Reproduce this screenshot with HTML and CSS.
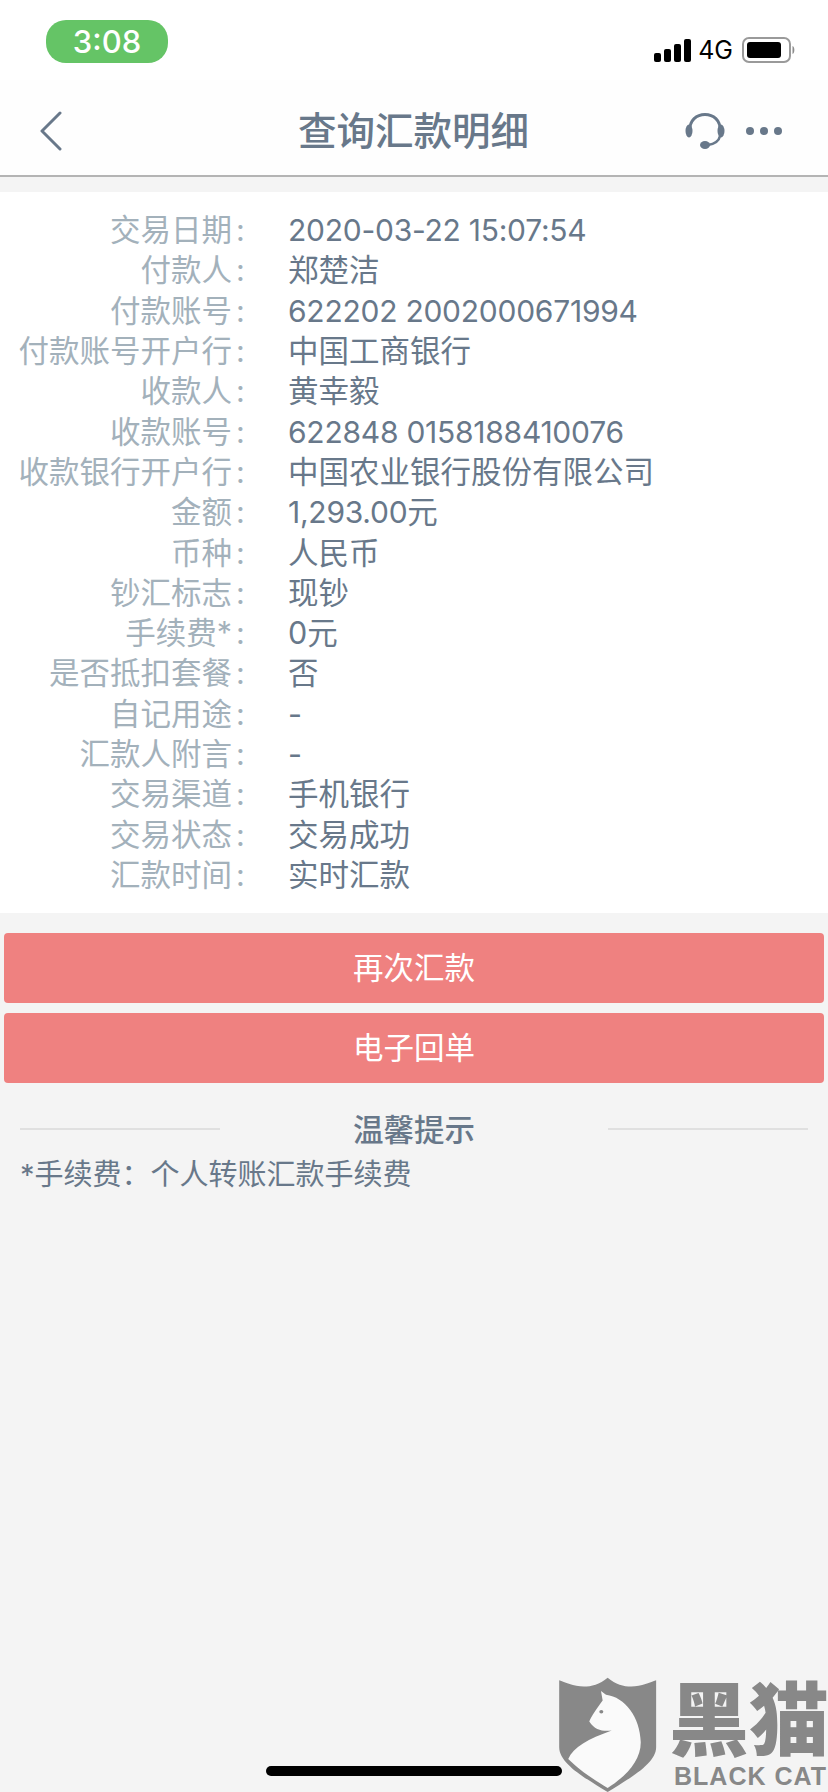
FILE: index.html
```html
<!DOCTYPE html>
<html lang="zh-CN">
<head>
    <meta charset="UTF-8">
    <meta name="viewport" content="width=device-width, initial-scale=1.0">
    <title>查询汇款明细</title>
    <link rel="stylesheet" href="styles.css">
</head>
<body>
    <header class="status-bar">
        <span class="time-pill">3:08</span>
        <div class="status-icons">
            <svg class="signal" width="37" height="23" viewBox="0 0 37 23">
                <rect x="0" y="14" width="7" height="9" rx="2"/>
                <rect x="10" y="10" width="7" height="13" rx="2"/>
                <rect x="20" y="5" width="7" height="18" rx="2"/>
                <rect x="30" y="0" width="7" height="23" rx="2"/>
            </svg>
            <span class="network">4G</span>
            <svg class="battery" width="54" height="26" viewBox="0 0 54 26">
                <rect x="1" y="1" width="47" height="24" rx="6" fill="none" stroke="#9a9a9a" stroke-width="2"/>
                <rect x="5" y="5" width="34" height="16" rx="3"/>
                <path d="M50.500 9 C53 10 53 16 50.500 17 Z" fill="#8c8c8c"/>
            </svg>
        </div>
    </header>

    <nav class="nav-bar">
        <svg class="back" width="24" height="40" viewBox="0 0 24 40">
            <path d="M21 2 L3 20 L21 38" fill="none" stroke="#68788a" stroke-width="3" stroke-linecap="round" stroke-linejoin="round"/>
        </svg>
        <h1>查询汇款明细</h1>
        <div class="nav-actions">
            <svg width="40" height="36" viewBox="0 0 40 36">
                <path d="M5 18 C3 -4 37 -4 35 18" fill="none" stroke="#68788a" stroke-width="3"/>
                <ellipse cx="4" cy="18" rx="3.500" ry="6.500" fill="#68788a"/>
                <ellipse cx="36" cy="18" rx="3.500" ry="6.500" fill="#68788a"/>
                <path d="M35 23 C34 28 29 31 23 32" fill="none" stroke="#68788a" stroke-width="2.500"/>
                <ellipse cx="20" cy="32" rx="5" ry="4" fill="#68788a"/>
            </svg>
            <div class="dots"><i></i><i></i><i></i></div>
        </div>
    </nav>

    <main>
        <section class="detail">
            <div class="row"><span class="label">交易日期<span class="colon">:</span></span><span class="value"><span class="num">2020-03-22 15:07:54</span></span></div>
            <div class="row"><span class="label">付款人<span class="colon">:</span></span><span class="value">郑楚洁</span></div>
            <div class="row"><span class="label">付款账号<span class="colon">:</span></span><span class="value"><span class="num">622202 2002000671994</span></span></div>
            <div class="row"><span class="label">付款账号开户行<span class="colon">:</span></span><span class="value">中国工商银行</span></div>
            <div class="row"><span class="label">收款人<span class="colon">:</span></span><span class="value">黄幸毅</span></div>
            <div class="row"><span class="label">收款账号<span class="colon">:</span></span><span class="value"><span class="num">622848 0158188410076</span></span></div>
            <div class="row"><span class="label">收款银行开户行<span class="colon">:</span></span><span class="value">中国农业银行股份有限公司</span></div>
            <div class="row"><span class="label">金额<span class="colon">:</span></span><span class="value"><span class="num">1,293.00</span>元</span></div>
            <div class="row"><span class="label">币种<span class="colon">:</span></span><span class="value">人民币</span></div>
            <div class="row"><span class="label">钞汇标志<span class="colon">:</span></span><span class="value">现钞</span></div>
            <div class="row"><span class="label">手续费*<span class="colon">:</span></span><span class="value">0元</span></div>
            <div class="row"><span class="label">是否抵扣套餐<span class="colon">:</span></span><span class="value">否</span></div>
            <div class="row"><span class="label">自记用途<span class="colon">:</span></span><span class="value">-</span></div>
            <div class="row"><span class="label">汇款人附言<span class="colon">:</span></span><span class="value">-</span></div>
            <div class="row"><span class="label">交易渠道<span class="colon">:</span></span><span class="value">手机银行</span></div>
            <div class="row"><span class="label">交易状态<span class="colon">:</span></span><span class="value">交易成功</span></div>
            <div class="row"><span class="label">汇款时间<span class="colon">:</span></span><span class="value">实时汇款</span></div>
        </section>

        <section class="actions">
            <button>再次汇款</button>
            <button>电子回单</button>
        </section>

        <section class="tips">
            <div class="tips-title">
                <span class="rule"></span>
                <h2>温馨提示</h2>
                <span class="rule"></span>
            </div>
            <p>*手续费：个人转账汇款手续费</p>
        </section>
    </main>

    <div class="home-bar"></div>

    <div class="watermark">
        <svg class="shield" width="98" height="115" viewBox="178 80 292 344">
            <path d="M178 90 C205 100 265 130 323 82 C380 130 440 100 468 90 L468 290 C468 340 385 385 323 424 C260 385 178 340 178 290 Z" fill="#888"/>
            <path d="M303 122 L318 133 C375 140 420 200 422 275 C422 330 380 375 323 412 C285 390 235 355 205 325 C220 290 265 265 335 240 C310 243 285 240 268 213 C275 195 290 175 308 150 Z" fill="#fafafa"/>
            <ellipse cx="304" cy="184" rx="6" ry="5" fill="#888"/>
        </svg>
        <div class="brand">
            <span class="brand-cn">黑猫</span>
            <span class="brand-en">BLACK CAT</span>
        </div>
    </div>
</body>
</html>
```

FILE: styles.css
```css
*{
    box-sizing: border-box;
}

html, body{
    margin: 0;
    height: 1792px;
    overflow: hidden;
}

body{
    position: relative;
    background-color: #f4f4f4;
    color: #68788a;
    font-family: 'Inter', 'Noto Sans CJK SC', sans-serif;
    font-size: 30.5px;
}

.status-bar{
    height: 80px;
    padding: 20px 32px 0 46px;
    background-color: #fff;
    display: flex;
    justify-content: space-between;
    align-items: flex-start;
}

.time-pill{
    width: 122px;
    height: 43px;
    border-radius: 20px;
    background-color: #65c466;
    color: #fff;
    font-size: 31px;
    font-weight: 500;
    line-height: 43px;
    text-align: center;
}

.status-icons{
    margin-top: 17px;
    display: flex;
    align-items: center;
    color: #000;
}

.network{
    margin: 0 9px 0 7px;
    font-size: 25px;
    line-height: 26px;
}

.nav-bar{
    height: 97px;
    padding: 6px 46px 0 39px;
    background-color: #fefefe;
    border-bottom: 2px solid #b4b4b4;
    display: grid;
    grid-template-columns: 1fr auto 1fr;
    align-items: center;
}

.nav-bar h1{
    margin: 0 0 0 6px;
    font-size: 38.5px;
    font-weight: 500;
    line-height: 50px;
}

.nav-actions{
    display: flex;
    justify-content: flex-end;
    align-items: center;
    gap: 21px;
}

.dots{
    display: flex;
    gap: 6px;
}

.dots i{
    width: 8px;
    height: 8px;
    border-radius: 50%;
    background-color: #68788a;
}

.detail{
    margin-top: 15px;
    padding: 18px 0;
    background-color: #fff;
}

.row{
    height: 40.3px;
    display: grid;
    grid-template-columns: 249px 1fr;
    column-gap: 39px;
    align-items: center;
    line-height: 40px;
    white-space: nowrap;
}

.label{
    color: #a3b1bb;
    text-align: right;
}

.colon{
    display: inline-block;
    width: 17px;
    text-align: center;
}

.num{
    font-size: 30px;
    letter-spacing: -0.25px;
}

.actions{
    padding: 20px 4px 0;
    display: flex;
    flex-direction: column;
    gap: 10px;
}

button{
    height: 70px;
    padding: 0 0 4px;
    border: none;
    border-radius: 4px;
    background-color: #ef8180;
    color: #fff;
    font-family: inherit;
    font-size: 30.5px;
}

.tips{
    padding: 26px 20px 0;
}

.tips-title{
    display: flex;
    justify-content: space-between;
    align-items: center;
}

.tips-title h2{
    margin: 0;
    font-size: 30.5px;
    font-weight: 500;
    line-height: 42px;
}

.rule{
    width: 200px;
    height: 2px;
    margin-bottom: 3px;
    background-color: #e0e0e0;
}

.tips p{
    margin: 4px 0 0;
    font-size: 29px;
    line-height: 40px;
}

.home-bar{
    position: absolute;
    left: 266px;
    top: 1766px;
    width: 296px;
    height: 10px;
    border-radius: 5px;
    background-color: #000;
}

.watermark{
    position: absolute;
    left: 559px;
    top: 1677px;
    display: flex;
    gap: 12px;
    color: #888;
}

.shield{
    display: block;
}

.brand{
    display: flex;
    flex-direction: column;
}

.brand-cn{
    margin-top: 3px;
    font-size: 80px;
    font-weight: 900;
    line-height: 79px;
    white-space: nowrap;
}

.brand-en{
    margin: 4px 0 0 5px;
    font-family: 'Liberation Sans', sans-serif;
    font-size: 25px;
    font-weight: 700;
    line-height: 26px;
    letter-spacing: 1px;
    white-space: nowrap;
}
```
